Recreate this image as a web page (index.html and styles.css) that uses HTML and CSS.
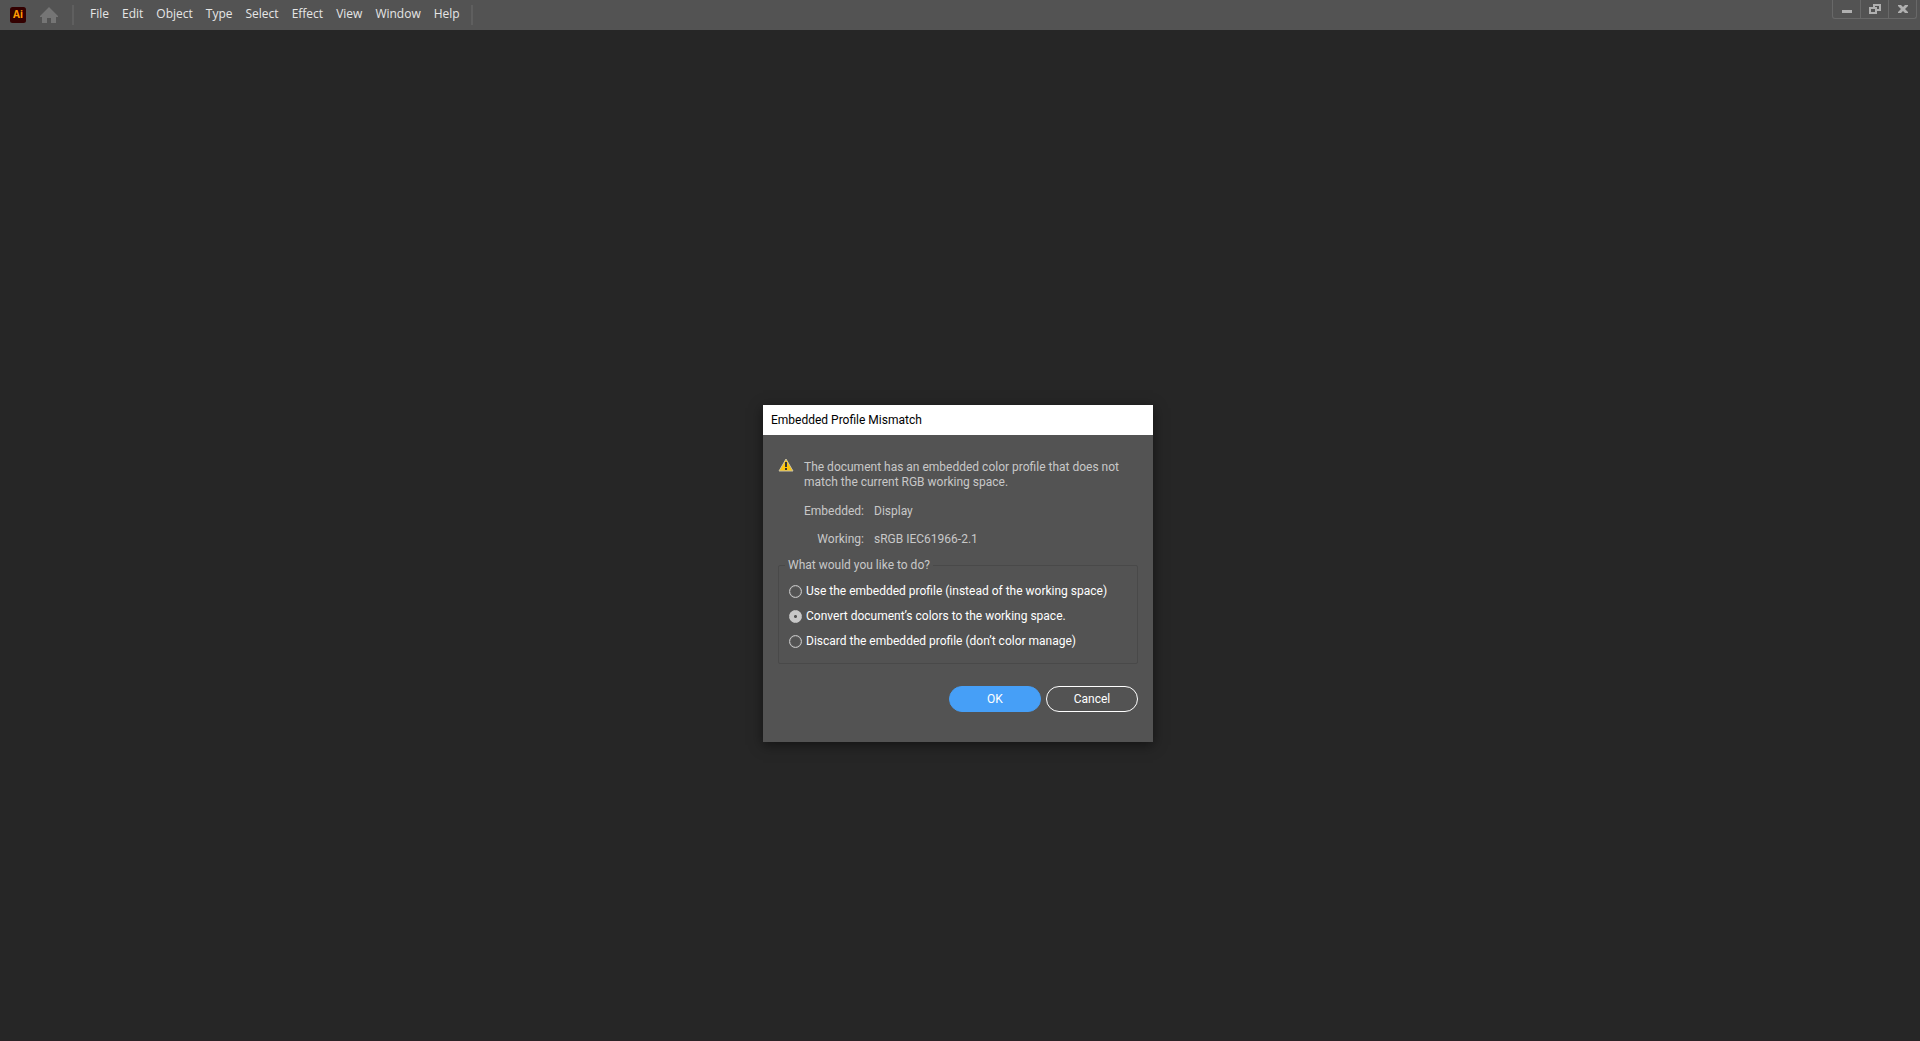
FILE: index.html
```html
<!DOCTYPE html>
<html lang="en">
<head>
<meta charset="utf-8">
<title>Adobe Illustrator</title>
<link rel="stylesheet" href="styles.css">
</head>
<body>
<header class="app-bar">
  <svg class="logo" width="16" height="16" viewBox="0 0 16 16" aria-hidden="true">
    <rect width="16" height="16" rx="2.5" fill="#330000"/>
    <text x="8" y="11" text-anchor="middle" fill="#ff9a00">Ai</text>
  </svg>
  <button class="home" aria-label="Home">
    <svg width="18" height="16" viewBox="0 0 18 16" aria-hidden="true"><path d="M9 0 0 9v1h2v6h5v-5h4v5h5v-6h2V9z" fill="#757575"/></svg>
  </button>
  <nav class="menu">
    <button>File</button>
    <button>Edit</button>
    <button>Object</button>
    <button>Type</button>
    <button>Select</button>
    <button>Effect</button>
    <button>View</button>
    <button>Window</button>
    <button>Help</button>
  </nav>
  <div class="window-controls">
    <button aria-label="Minimize"><svg width="12" height="10" viewBox="0 0 12 10"><path d="M1 6h10v3H1z" fill="#b0b0b0"/></svg></button>
    <button aria-label="Restore"><svg width="12" height="10" viewBox="0 0 12 10"><path d="M5 3V1h6v5H8M1 4h6v5H1z" fill="none" stroke="#b0b0b0" stroke-width="2"/></svg></button>
    <button aria-label="Close"><svg width="12" height="10" viewBox="0 0 12 10"><path d="M1 1h3l2 2 2-2h3v1L8 5l3 3v1H8L6 7 4 9H1V8l3-3-3-3z" fill="#b0b0b0"/></svg></button>
  </div>
</header>
<main class="workspace">
  <form class="dialog" role="dialog" aria-labelledby="dialog-title">
    <h1 class="dialog-title" id="dialog-title">Embedded Profile Mismatch</h1>
    <div class="dialog-body">
      <div class="notice">
        <svg width="16" height="14" viewBox="0 0 16 14" aria-hidden="true">
          <path d="M8 1 15 13H1z" fill="#fcc40c" stroke="#c9c2a5" stroke-linejoin="round"/>
          <path d="M7 4h2v5H7zM7 10h2v2H7z" fill="#333"/>
        </svg>
        <p>The document has an embedded color profile that does not match the current RGB working space.</p>
      </div>
      <dl class="profiles">
        <dt>Embedded:</dt><dd>Display</dd>
        <dt>Working:</dt><dd>sRGB IEC61966-2.1</dd>
      </dl>
      <fieldset class="choices">
        <legend>What would you like to do?</legend>
        <label><input type="radio" name="action">Use the embedded profile (instead of the working space)</label>
        <label><input type="radio" name="action" checked>Convert document’s colors to the working space.</label>
        <label><input type="radio" name="action">Discard the embedded profile (don’t color manage)</label>
      </fieldset>
      <div class="actions">
        <button type="button" class="primary">OK</button>
        <button type="button">Cancel</button>
      </div>
    </div>
  </form>
</main>
</body>
</html>
```
FILE: styles.css
```css
* { box-sizing: border-box; }
body {
  margin: 0;
  min-height: 100vh;
  display: flex;
  flex-direction: column;
  background: #262626;
  color: #c8c8c8;
  font: 12px/15px Roboto, sans-serif;
}
button {
  padding: 0;
  border: 0;
  background: none;
  color: inherit;
  font: inherit;
}
svg { display: block; }

.app-bar {
  display: flex;
  align-items: center;
  height: 30px;
  padding: 0 3px 0 10px;
  background: #535353;
}
.logo text { font: bold 10px "Noto Sans", sans-serif; }
.home { margin: 0 14px; }
.menu {
  display: flex;
  gap: 13px;
  height: 20px;
  padding: 0 11px 4px 16px;
  border: solid #5f5f5f;
  border-width: 0 2px;
  color: #e6e6e6;
  font-family: "Open Sans", sans-serif;
}
.window-controls {
  display: flex;
  align-self: flex-start;
  height: 19px;
  margin-left: auto;
  border: 1px solid #686868;
  border-top: 0;
  border-radius: 0 0 3px 3px;
}
.window-controls button {
  box-sizing: content-box;
  display: grid;
  place-items: center;
  width: 27px;
}
.window-controls button + button { border-left: 1px solid #686868; }

.workspace {
  display: flex;
  flex: 1;
  justify-content: center;
  align-items: flex-start;
  padding: 375px 4px 0 0;
  border-bottom: 1px solid #2a2226;
}
.dialog {
  width: 390px;
  background: #535353;
  box-shadow: 0 3px 12px rgba(0, 0, 0, .5);
}
.dialog-title {
  margin: 0;
  padding: 0 8px;
  background: #fff;
  color: #000;
  font-size: 12px;
  font-weight: 400;
  line-height: 30px;
}
.dialog-body { padding: 23px 15px 30px; }
.notice {
  display: flex;
  gap: 10px;
}
.notice svg { flex: none; }
.notice p { margin: 2px 0 0; }
.profiles {
  display: grid;
  grid-template-columns: 61px 1fr;
  gap: 13px 10px;
  margin: 14px 0 11px 25px;
}
.profiles dt { text-align: right; }
.profiles dd { margin: 0; }
.choices {
  display: flex;
  flex-direction: column;
  gap: 10px;
  margin: 0;
  padding: 11px 10px 14px;
  border: 1px solid #494949;
  border-radius: 2px;
}
.choices legend {
  margin-left: -4px;
  padding: 0 3px;
}
.choices label {
  display: flex;
  align-items: center;
  gap: 4px;
  color: #fff;
}
.choices input {
  appearance: none;
  width: 13px;
  height: 13px;
  margin: 0;
  border: 1px solid #c8c8c8;
  border-radius: 50%;
  box-shadow: inset 0 0 1px #c8c8c8;
}
.choices input:checked { background: radial-gradient(circle, #535353 1px, #c8c8c8 2px); }
.actions {
  display: flex;
  justify-content: flex-end;
  gap: 5px;
  margin-top: 22px;
}
.actions button {
  width: 92px;
  height: 26px;
  border: 1px solid #fff;
  border-radius: 13px;
  color: #fff;
}
.actions .primary {
  border-color: #469ff7;
  background: #469ff7;
}
```
